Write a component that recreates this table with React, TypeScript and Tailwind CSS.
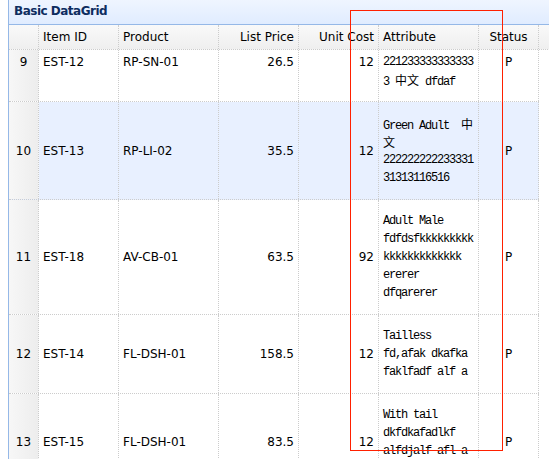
import React from "react";

interface GridRow {
  no: number;
  itemId: string;
  product: string;
  listPrice: string;
  unitCost: string;
  attr: string[];
  status: string;
  height: string;
  hover?: boolean;
}

const rows: GridRow[] = [
  {
    no: 9,
    itemId: "EST-12",
    product: "RP-SN-01",
    listPrice: "26.5",
    unitCost: "12",
    attr: ["", "221233333333333", "3 中文 dfdaf"],
    status: "P",
    height: "h-[79px]",
  },
  {
    no: 10,
    itemId: "EST-13",
    product: "RP-LI-02",
    listPrice: "35.5",
    unitCost: "12",
    attr: ["Green Adult  中", "文", "222222222233331", "31313116516"],
    status: "P",
    height: "h-[98px]",
    hover: true,
  },
  {
    no: 11,
    itemId: "EST-18",
    product: "AV-CB-01",
    listPrice: "63.5",
    unitCost: "92",
    attr: ["Adult Male", "fdfdsfkkkkkkkkk", "kkkkkkkkkkkkk", "ererer", "dfqarerer"],
    status: "P",
    height: "h-[115px]",
  },
  {
    no: 12,
    itemId: "EST-14",
    product: "FL-DSH-01",
    listPrice: "158.5",
    unitCost: "12",
    attr: ["Tailless", "fd,afak dkafka", "faklfadf alf a"],
    status: "P",
    height: "h-[79px]",
  },
  {
    no: 13,
    itemId: "EST-15",
    product: "FL-DSH-01",
    listPrice: "83.5",
    unitCost: "12",
    attr: ["With tail", "dkfdkafadlkf", "alfdjalf afl a", ""],
    status: "P",
    height: "h-[97px]",
  },
];

const cell = "flex h-full items-center border-r border-dotted border-[#ccc] whitespace-nowrap";

// split CJK chars out so they keep full width
function AttrLine({ text }: { text: string }) {
  const parts = text.split(/([\u4e00-\u9fff]+)/);
  return (
    <div className="h-[18px] leading-[18px] whitespace-pre">
      {parts.map((p, i) =>
        /[\u4e00-\u9fff]/.test(p) ? (
          <span key={i} className="font-['Noto_Sans_CJK_SC',sans-serif] text-[12px] tracking-normal">
            {p}
          </span>
        ) : (
          <span key={i}>{p}</span>
        )
      )}
    </div>
  );
}

export default function App() {
  return (
    <div className="relative h-[459px] w-[549px] overflow-hidden bg-white font-['DejaVu_Sans',sans-serif] text-[12px] text-black">
      <div className="ml-[8px] flex h-full w-[600px] flex-col border-l border-[#95b8e7]">
        <div className="flex h-[25px] shrink-0 items-center border-b border-[#95b8e7] bg-gradient-to-b from-[#eff5ff] to-[#e0ecff] pl-[5px] pb-[2px]">
          <span className="text-[12px] font-bold tracking-[-0.5px] text-[#0e2d5f]">Basic DataGrid</span>
        </div>

        <div className="flex h-[25px] shrink-0 border-b border-dotted border-[#ccc] bg-gradient-to-b from-[#f9f9f9] to-[#efefef]">
          <div className={`${cell} w-[30px]`} />
          <div className={`${cell} w-[80px] px-[4px]`}>Item ID</div>
          <div className={`${cell} w-[100px] px-[4px]`}>Product</div>
          <div className={`${cell} w-[80px] justify-end px-[4px]`}>List Price</div>
          <div className={`${cell} w-[80px] justify-end px-[4px]`}>Unit Cost</div>
          <div className={`${cell} w-[100px] px-[4px]`}>Attribute</div>
          <div className={`${cell} w-[60px] justify-center`}>Status</div>
        </div>

        <div className="flex-1 overflow-hidden bg-white">
          <div className="-mt-[27px]">
            {rows.map((r) => (
              <div key={r.no} className={`flex w-[530px] border-b border-dotted border-[#ccc] ${r.height} ${r.hover ? "bg-[#e8f0ff]" : ""}`}>
                <div className={`${cell} w-[30px] justify-center bg-gradient-to-r from-[#f7f7f7] to-[#ededed]`}>{r.no}</div>
                <div className={`${cell} w-[80px] px-[4px]`}>{r.itemId}</div>
                <div className={`${cell} w-[100px] px-[4px]`}>{r.product}</div>
                <div className={`${cell} w-[80px] justify-end px-[4px]`}>{r.listPrice}</div>
                <div className={`${cell} w-[80px] justify-end px-[4px]`}>{r.unitCost}</div>
                <div className={`${cell} w-[100px] pl-[4px]`}>
                  <div className="font-['Liberation_Mono',monospace] text-[12px] tracking-[-1.2px]">
                    {r.attr.map((a, i) => (
                      <AttrLine key={i} text={a} />
                    ))}
                  </div>
                </div>
                <div className={`${cell} w-[60px] justify-center`}>{r.status}</div>
              </div>
            ))}
          </div>
        </div>
      </div>

      {/* red annotation box */}
      <div className="pointer-events-none absolute left-[350px] top-[10px] h-[441px] w-[153px] border border-[#ff2000]" />
    </div>
  );
}
